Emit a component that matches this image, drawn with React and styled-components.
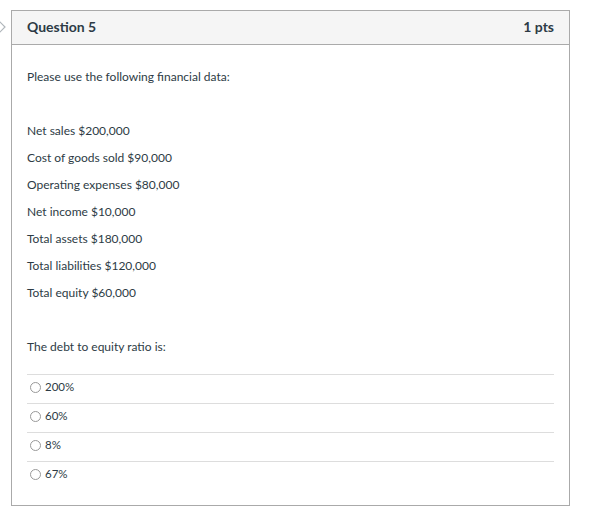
import React from 'react';
import styled, { createGlobalStyle } from 'styled-components';

const GlobalStyle = createGlobalStyle`
  body {
    margin: 0;
    background: #fff;
    font-family: Lato, 'Liberation Sans', sans-serif;
    color: #2d3b45;
  }
`;

const Page = styled.div`
  display: flex;
  align-items: flex-start;
  padding-top: 10px;
`;

const Chevron = styled.svg`
  flex: 0 0 auto;
  margin-left: -2px;
  margin-top: 10px;
  margin-right: 5px;
`;

const Card = styled.div`
  width: 559px;
  box-sizing: border-box;
  border: 1px solid #aaa;
  background: #fff;
`;

const Header = styled.div`
  display: flex;
  align-items: center;
  justify-content: space-between;
  height: 34px;
  padding: 0 15px 3px;
  box-sizing: border-box;
  background: #f5f5f5;
  border-bottom: 1px solid #aaa;
  font-size: 14px;
  font-weight: 700;
`;

const Points = styled.span`
  font-weight: 700;
`;

const Body = styled.div`
  padding: 12px 15px 15px;
  font-size: 12px;
`;

const Para = styled.p`
  margin: 12px 0;
  line-height: 15px;
`;

const Answers = styled.div`
  margin-top: 20px;
`;

const Answer = styled.label`
  display: flex;
  align-items: center;
  gap: 4px;
  padding: 4px 0 8px 3px;
  line-height: 16px;
  border-top: 1px solid #ddd;
  font-size: 11.5px;
`;

const Radio = styled.span`
  width: 9px;
  height: 9px;
  border: 1px solid #999;
  border-radius: 50%;
  background: #fff;
`;

const data = [
  'Net sales $200,000',
  'Cost of goods sold $90,000',
  'Operating expenses $80,000',
  'Net income $10,000',
  'Total assets $180,000',
  'Total liabilities $120,000',
  'Total equity $60,000',
];

const answers = ['200%', '60%', '8%', '67%'];

export default function App() {
  return (
    <>
      <GlobalStyle />
      <Page>
        <Chevron width="8" height="14" viewBox="0 0 8 14">
          <path d="M1 1 L7 7 L1 13" fill="none" stroke="#b0b6bb" strokeWidth="1.2" />
        </Chevron>
        <Card>
          <Header>
            <span>Question 5</span>
            <Points>1 pts</Points>
          </Header>
          <Body>
            <Para>Please use the following financial data:</Para>
            <Para>&nbsp;</Para>
            {data.map(line => (
              <Para key={line}>{line}</Para>
            ))}
            <Para>&nbsp;</Para>
            <Para>The debt to equity ratio is:</Para>
            <Answers>
              {answers.map(a => (
                <Answer key={a}>
                  <Radio />
                  {a}
                </Answer>
              ))}
            </Answers>
          </Body>
        </Card>
      </Page>
    </>
  );
}
